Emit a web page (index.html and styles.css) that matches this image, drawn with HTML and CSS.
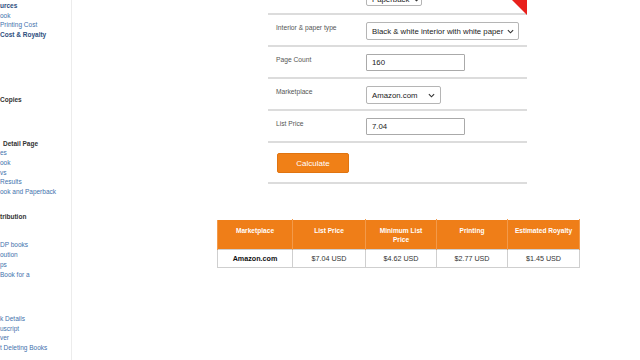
FILE: index.html
```html
<!DOCTYPE html>
<html>
<head>
<meta charset="utf-8">
<link rel="stylesheet" href="styles.css">
</head>
<body>
<div class="page">
  <aside class="sidebar">
    <div class="nav nav-top">
      <a class="link strong">urces</a>
      <a class="link">ook</a>
      <a class="link">Printing Cost</a>
      <a class="link strong">Cost &amp; Royalty</a>
    </div>
    <div class="nav nav-copies">
      <span class="head">Copies</span>
    </div>
    <div class="nav nav-detail">
      <span class="head indent">Detail Page</span>
      <a class="link">es</a>
      <a class="link">ook</a>
      <a class="link">vs</a>
      <a class="link">Results</a>
      <a class="link">ook and Paperback</a>
    </div>
    <div class="nav nav-dist">
      <span class="head">tribution</span>
    </div>
    <div class="nav nav-kdp">
      <a class="link">DP books</a>
      <a class="link">oution</a>
      <a class="link">ps</a>
      <a class="link">Book for a</a>
      <a class="link">&nbsp;</a>
    </div>
    <div class="nav nav-last">
      <a class="link">k Details</a>
      <a class="link">uscript</a>
      <a class="link">ver</a>
      <a class="link">t Deleting Books</a>
    </div>
  </aside>

  <main class="main">
    <div class="calc">
      <span class="ribbon"></span>
      <div class="row row-first">
        <span class="label"></span>
        <span class="select sel-paperback">Paperback
          <svg class="chev" viewBox="0 0 8 5" width="7" height="5"><path d="M1 1l3 3 3-3" fill="none" stroke="#333" stroke-width="1.3"/></svg>
        </span>
      </div>
      <div class="row">
        <span class="label">Interior &amp; paper type</span>
        <span class="select sel-interior">Black &amp; white interior with white paper
          <svg class="chev" viewBox="0 0 8 5" width="7" height="5"><path d="M1 1l3 3 3-3" fill="none" stroke="#333" stroke-width="1.3"/></svg>
        </span>
      </div>
      <div class="row">
        <span class="label">Page Count</span>
        <span class="input">160</span>
      </div>
      <div class="row">
        <span class="label">Marketplace</span>
        <span class="select sel-market">Amazon.com
          <svg class="chev" viewBox="0 0 8 5" width="7" height="5"><path d="M1 1l3 3 3-3" fill="none" stroke="#333" stroke-width="1.3"/></svg>
        </span>
      </div>
      <div class="row">
        <span class="label">List Price</span>
        <span class="input">7.04</span>
      </div>
      <div class="row row-btn">
        <button class="btn">Calculate</button>
      </div>
    </div>

    <table class="result">
      <thead>
        <tr>
          <th class="c1">Marketplace</th>
          <th class="c2">List Price</th>
          <th class="c3">Minimum List Price</th>
          <th class="c4">Printing</th>
          <th class="c5">Estimated Royalty</th>
        </tr>
      </thead>
      <tbody>
        <tr>
          <td class="mk">Amazon.com</td>
          <td>$7.04 USD</td>
          <td>$4.62 USD</td>
          <td>$2.77 USD</td>
          <td>$1.45 USD</td>
        </tr>
      </tbody>
    </table>
  </main>
</div>
</body>
</html>
```

FILE: styles.css
```css
* { box-sizing: border-box; }
html, body {
  margin: 0;
  padding: 0;
  background: #fff;
  font-family: "Liberation Sans", Arial, sans-serif;
  overflow: hidden;
}
.page {
  display: flex;
  width: 640px;
  height: 360px;
}
.sidebar {
  width: 72px;
  flex: none;
  height: 360px;
  border-right: 1px solid #ececec;
  overflow: hidden;
  white-space: nowrap;
  font-size: 6.5px;
  line-height: 9.7px;
}
.nav { display: flex; flex-direction: column; }
.link { color: #4372ad; text-decoration: none; }
.link.strong { color: #2d4e7e; font-weight: bold; }
.head { color: #333; font-weight: bold; }
.indent { padding-left: 3px; }
.nav-top { margin-top: 1px; }
.nav-copies { margin-top: 55px; }
.nav-detail { margin-top: 34px; }
.nav-dist { margin-top: 15px; }
.nav-kdp { margin-top: 19px; }
.nav-last { margin-top: 25px; }

.main {
  flex: 1;
  padding-left: 145px;
  display: flex;
  flex-direction: column;
}
.calc {
  position: relative;
  width: 259px;
  margin-left: 51px;
  margin-top: -17px;
}
.ribbon {
  position: absolute;
  right: 0;
  top: 17px;
  width: 0;
  height: 0;
  border-top: 15px solid #e8201c;
  border-left: 15px solid transparent;
}
.row {
  display: flex;
  align-items: flex-start;
  height: 32px;
  padding: 7px 0 0 8px;
  border-bottom: 2px solid #dcdcdc;
}
.row-first { height: 32px; padding-top: 5px; }
.label {
  width: 90px;
  flex: none;
  font-size: 6.7px;
  color: #555;
  padding-top: 2px;
}
.select, .input {
  display: inline-flex;
  align-items: center;
  height: 18px;
  border: 1px solid #b5b5b5;
  border-radius: 2px;
  background: #fff;
  font-size: 7.8px;
  color: #222;
  padding: 0 5px;
  white-space: nowrap;
}
.input {
  width: 99px;
  height: 17px;
  border-color: #aaa;
  border-radius: 1px;
}
.select { justify-content: space-between; }
.sel-paperback {
  width: 56px;
  align-items: flex-end;
  padding-bottom: 1px;
  line-height: 9px;
}
.sel-interior { width: 153px; }
.sel-market { width: 75px; }
.chev { flex: none; margin-left: 4px; }
.sel-paperback .chev { margin-bottom: 2px; }
.row-btn {
  height: 41px;
  padding: 10px 0 0 9px;
}
.btn {
  width: 72px;
  height: 20px;
  background: #f08017;
  color: #fff;
  border: 1px solid #e07410;
  border-radius: 2px;
  font-family: "Liberation Sans", Arial, sans-serif;
  font-size: 8px;
  padding: 0;
}

.result {
  margin-top: 35px;
  width: 362px;
  border-collapse: collapse;
  table-layout: fixed;
  font-size: 7.2px;
}
.result th {
  background: #ef7e18;
  color: #fff;
  font-weight: bold;
  font-size: 6.6px;
  line-height: 9px;
  height: 30px;
  vertical-align: top;
  padding: 6px 2px 0;
  border-left: 1px solid #f39a4a;
  border-right: 1px solid #f39a4a;
  border-top: 1px solid #fff;
}
.result th.c3 { padding-left: 10px; padding-right: 10px; }
.result td {
  height: 18px;
  text-align: center;
  color: #333;
  border: 1px solid #cfcfcf;
  padding: 0 3px;
}
.result td.mk { font-weight: bold; color: #111; }
.c1 { width: 75px; }
.c2 { width: 73px; }
.c3 { width: 71px; }
.c4 { width: 71px; }
.c5 { width: 72px; }
```
